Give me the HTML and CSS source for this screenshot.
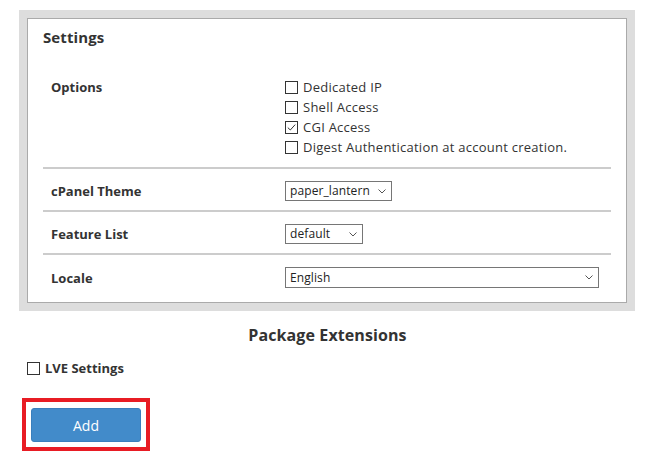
FILE: index.html
```html
<!DOCTYPE html>
<html>
<head>
<meta charset="utf-8">
<link rel="stylesheet" href="styles.css">
</head>
<body>
<div class="page">
  <div class="frame">
    <div class="panel">
      <h3 class="title">Settings</h3>
      <div class="table">
        <div class="row row-options">
          <div class="label">Options</div>
          <div class="value">
            <div class="check"><span class="cb"></span>Dedicated IP</div>
            <div class="check"><span class="cb"></span>Shell Access</div>
            <div class="check"><span class="cb"><svg width="11" height="11" viewBox="0 0 11 11"><polyline points="1.8,5.6 4.3,8 9.2,2.6" fill="none" stroke="#333" stroke-width="1"/></svg></span>CGI Access</div>
            <div class="check"><span class="cb"></span>Digest Authentication at account creation.</div>
          </div>
        </div>
        <div class="row">
          <div class="label">cPanel Theme</div>
          <div class="value">
            <div class="select sel-theme"><span>paper_lantern</span><svg class="chev" width="8" height="5" viewBox="0 0 8 5"><path d="M0.5 0.5 L4 4 L7.5 0.5" fill="none" stroke="#555" stroke-width="1"/></svg></div>
          </div>
        </div>
        <div class="row">
          <div class="label">Feature List</div>
          <div class="value">
            <div class="select sel-feature"><span>default</span><svg class="chev" width="8" height="5" viewBox="0 0 8 5"><path d="M0.5 0.5 L4 4 L7.5 0.5" fill="none" stroke="#555" stroke-width="1"/></svg></div>
          </div>
        </div>
        <div class="row row-last">
          <div class="label">Locale</div>
          <div class="value">
            <div class="select sel-locale"><span>English</span><svg class="chev" width="8" height="5" viewBox="0 0 8 5"><path d="M0.5 0.5 L4 4 L7.5 0.5" fill="none" stroke="#555" stroke-width="1"/></svg></div>
          </div>
        </div>
      </div>
    </div>
  </div>
  <h2 class="ext-title">Package Extensions</h2>
  <div class="lve"><span class="cb"></span>LVE Settings</div>
  <div class="highlight">
    <button class="btn">Add</button>
  </div>
</div>
</body>
</html>
```
FILE: styles.css
```css
html, body {
  margin: 0;
  padding: 0;
  background: #fff;
}
body {
  font-family: "Open Sans", "Noto Sans", sans-serif;
  font-size: 13px;
  color: #333;
}
.page {
  padding: 10px 20px 0 19px;
}
.frame {
  background: #ddd;
  padding: 8px;
}
.panel {
  background: #fff;
  border: 1px solid #aaa;
  padding: 7px 15px 5px;
}
.title {
  margin: 0 0 21px;
  font-size: 15px;
  line-height: 22px;
  font-weight: 700;
  color: #333;
  letter-spacing: 0.1px;
}
.table {
  display: flex;
  flex-direction: column;
}
.row {
  display: flex;
  align-items: center;
  padding: 12px 0 9px;
  border-top: 2px solid #ccc;
}
.row-options {
  align-items: flex-start;
  border-top: none;
  padding: 8px 0 10px;
}
.label {
  width: 234px;
  padding-left: 8px;
  font-weight: 700;
  line-height: 20px;
}
.value {
  flex: 1;
}
.check {
  display: flex;
  align-items: center;
  line-height: 20px;
  height: 20px;
  letter-spacing: 0.25px;
}
.cb {
  display: inline-flex;
  align-items: center;
  justify-content: center;
  width: 11px;
  height: 11px;
  border: 1px solid #333;
  background: #fff;
  margin-right: 5px;
  flex: none;
}
.cb svg {
  display: block;
}
.select {
  display: flex;
  align-items: center;
  justify-content: space-between;
  box-sizing: border-box;
  height: 20px;
  border: 1px solid #767676;
  background: #fff;
  padding: 0 5px 0 4px;
  font-size: 12px;
  letter-spacing: 0.1px;
  line-height: 18px;
  color: #222;
}
.sel-theme { width: 107px; }
.sel-feature { width: 78px; }
.sel-locale { width: 314px; height: 21px; }
.chev {
  display: block;
  flex: none;
}
.ext-title {
  margin: 12px 0 0;
  text-align: center;
  font-size: 16px;
  line-height: 24px;
  font-weight: 700;
  color: #333;
  letter-spacing: 0.1px;
  padding-left: 1px;
}
.lve {
  display: flex;
  align-items: center;
  margin: 11px 0 0 8px;
  line-height: 20px;
  font-weight: 700;
}
.highlight {
  display: inline-block;
  margin: 20px 0 0 3px;
  border: 4px solid #e81c24;
  padding: 6px 5px 5px;
}
.btn {
  display: block;
  width: 110px;
  height: 34px;
  background: #428bca;
  border: 1px solid #3a7fbd;
  border-radius: 3px;
  color: #fff;
  font-family: "Open Sans", "Noto Sans", sans-serif;
  font-size: 14px;
  padding: 0;
}
```
